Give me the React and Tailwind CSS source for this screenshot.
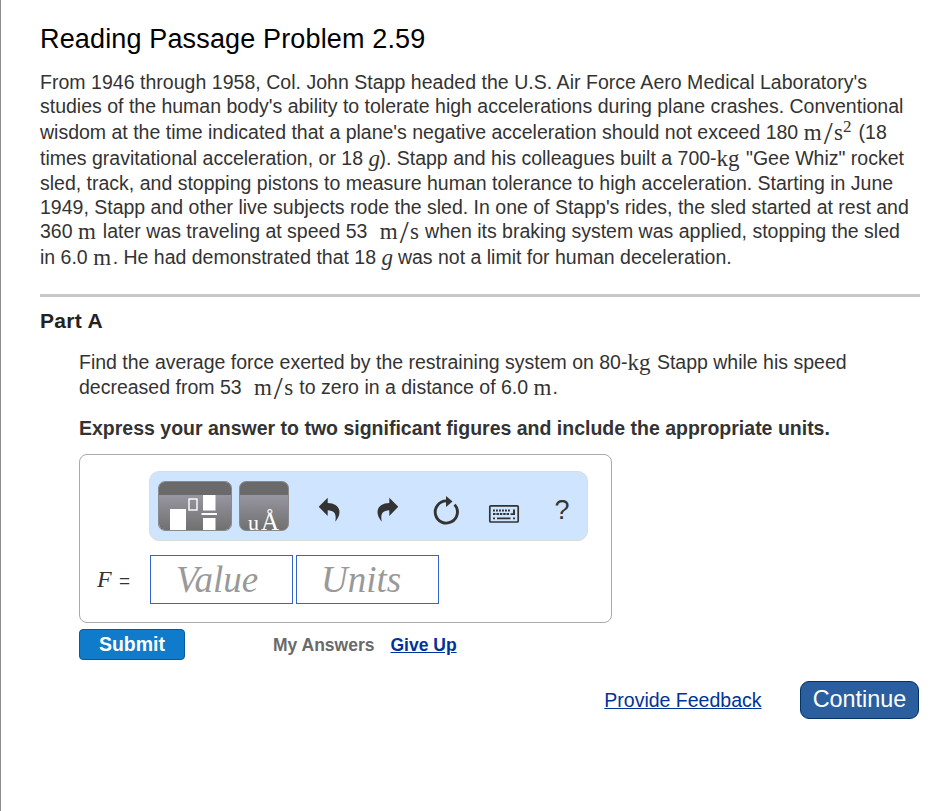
import { useState } from 'react'

function Unit({ children, className = '' }) {
  return (
    <span className={`inline-block translate-y-px whitespace-nowrap font-['Liberation_Serif',serif] text-[23px] leading-none ${className}`}>
      {children}
    </span>
  )
}

function Slash() {
  return <span className="mx-[3px] inline-block translate-y-px scale-x-[1.4] scale-y-[1.35] leading-none">/</span>
}

function Passage() {
  return (
    <div className="mt-[15px] whitespace-nowrap text-[19.5px] leading-6 text-[#333]">
      <div className="h-6 tracking-[0.03px]">From 1946 through 1958, Col. John Stapp headed the U.S. Air Force Aero Medical Laboratory&apos;s</div>
      <div className="h-6">studies of the human body&apos;s ability to tolerate high accelerations during plane crashes. Conventional</div>
      <div className="mt-[2px] h-6">
        wisdom at the time indicated that a plane&apos;s negative acceleration should not exceed 180{' '}
        <Unit className="w-[49.5px]">m<Slash />s<span className="relative -top-[8px] text-[17px] leading-none">2</span></Unit> (18
      </div>
      <div className="mt-[2px] h-6">
        times gravitational acceleration, or 18 <Unit className="w-[11px] italic">g</Unit>). Stapp and his colleagues built a 700-
        <Unit className="w-[24px]">kg</Unit> &quot;Gee Whiz&quot; rocket
      </div>
      <div className="mt-px h-6">sled, track, and stopping pistons to measure human tolerance to high acceleration. Starting in June</div>
      <div className="h-6">1949, Stapp and other live subjects rode the sled. In one of Stapp&apos;s rides, the sled started at rest and</div>
      <div className="h-6">
        360 <Unit className="w-[19.5px]">m</Unit> later was traveling at speed 53 &nbsp;<Unit className="w-[41.5px] pl-[1.5px]">m<Slash />s</Unit> when its
        braking system was applied, stopping the sled
      </div>
      <div className="mt-[2px] h-6">
        in 6.0 <Unit className="w-[19.5px]">m</Unit>. He had demonstrated that 18 <Unit className="w-[11px] italic">g</Unit> was not a limit for human deceleration.
      </div>
    </div>
  )
}

function TemplateButton() {
  return (
    <button type="button" aria-label="Templates" className="h-[50px] w-[74px] overflow-hidden rounded-[7px] border border-[#8a8a8a]">
      <svg viewBox="0 0 72 48" width="72" height="48">
        <defs>
          <linearGradient id="key" x1="0" y1="0" x2="0" y2="1">
            <stop offset="0.27" stopColor="#9896a1" />
            <stop offset="1" stopColor="#707070" />
          </linearGradient>
        </defs>
        <rect width="72" height="48" fill="url(#key)" />
        <rect width="72" height="13" fill="#6a6a6a" />
        <path d="M11 27h16v21H11zM44 13h12.500v15.500H44zM44 36h12.500v12H44zM42.500 31h15.500v2H42.500z" fill="#fff" />
        <rect x="30" y="17" width="8" height="11" fill="none" stroke="#fff" strokeWidth="1.4" />
      </svg>
    </button>
  )
}

function SymbolButton() {
  return (
    <button
      type="button"
      aria-label="Symbols"
      className="h-[50px] w-[50px] overflow-hidden rounded-[7px] border border-[#8a8a8a] bg-linear-to-b from-[#9896a1] from-27% to-[#707070]"
    >
      <span className="block h-[13px] bg-[#6a6a6a]" />
      <span className="flex h-[35px] items-baseline justify-end gap-[2px] pt-[14px] pr-[9px] font-['Liberation_Serif',serif] text-white">
        <span className="text-[22px] leading-none">u</span>
        <span className="text-[25px] leading-none">Å</span>
      </span>
    </button>
  )
}

function Toolbar() {
  return (
    <div className="flex h-[70px] w-[439px] rounded-[10px] border border-[#dcdcdc] bg-[#cfe5ff] pt-[9px] pl-[8px] text-[#333]">
      <TemplateButton />
      <div className="ml-[7px]"><SymbolButton /></div>
      <svg className="ml-[29px] shrink-0" width="250" height="51" viewBox="0 0 250 51" fill="currentColor">
        <path d="M.7 25.700 9.700 16.700V22C17 22 21.500 26 21.500 31C21.500 35 19.500 38 17.300 40.700C18.500 33 17 29.700 9.700 29.200V35z" />
        <path d="M80.300 25.700 71.300 16.700V22C64 22 59.500 26 59.500 31C59.500 35 61.500 38 63.700 40.700C62.500 33 64 29.700 71.300 29.200V35z" />
        <path d="M136.600 23.600A11.100 11.100 0 1 1 128.500 19.900" fill="none" stroke="currentColor" strokeWidth="2.900" />
        <path d="M128 15 134.500 20.500 128 26z" />
        <rect x="171.800" y="24.800" width="28.400" height="16.200" rx="1" fill="none" stroke="currentColor" strokeWidth="1.700" />
        <path d="M175 29.500h17" fill="none" stroke="currentColor" strokeWidth="1.900" strokeDasharray="1.900 1.100" />
        <path d="M175 33h16" fill="none" stroke="currentColor" strokeWidth="1.900" strokeDasharray="2.500 .9" />
        <path d="M175 36.500h2v1.800h-2zM179 36.500h13.500v1.800H179zM195 36.500h2v1.800h-2zM195 28.500h2v5.500h-4.500v-1.800H195z" />
      </svg>
      <button type="button" aria-label="Help" className="-ml-[14px] mt-[13px] h-8 w-4 shrink-0 text-[27px] leading-8">?</button>
    </div>
  )
}

export default function App() {
  const [value, setValue] = useState('')
  const [units, setUnits] = useState('')

  return (
    <main className="h-[811px] w-[952px] overflow-hidden border-l border-[#8c8c8c] bg-white pl-[39px] font-['Liberation_Sans',Arial,sans-serif]">
      <h1 className="pt-[23px] text-[27px] leading-8 tracking-[0.15px] text-black">Reading Passage Problem 2.59</h1>
      <Passage />

      <div className="mt-[25px] h-[3px] w-[880px] bg-[#c8c8c8]" />
      <h2 className="mt-[12px] text-[21px] leading-6 font-bold tracking-[0.3px] text-[#222]">Part A</h2>

      <section className="pl-[39px] text-[19.5px] leading-6 text-[#333]">
        <div className="mt-[17px] whitespace-nowrap">
          <div className="h-6">
            Find the average force exerted by the restraining system on 80-<Unit className="w-[24px]">kg</Unit> Stapp while his speed
          </div>
          <div className="mt-px h-6">
            decreased from 53 &nbsp;<Unit className="w-[41.5px] pl-[1.5px]">m<Slash />s</Unit> to zero in a distance of 6.0 <Unit className="w-[19px]">m</Unit>.
          </div>
        </div>
        <p className="mt-[17px] font-bold whitespace-nowrap">Express your answer to two significant figures and include the appropriate units.</p>

        <div className="mt-[14px] h-[169px] w-[533px] rounded-[8px] border border-[#aaa] pt-[16px]">
          <div className="ml-[69px]"><Toolbar /></div>
          <div className="mt-[14px] flex h-[49px] items-center gap-[3px]">
            <label className="w-[67px] pl-[17px] text-[19px] whitespace-nowrap">
              <span className="mr-[2px] font-['Liberation_Serif',serif] text-[24px] italic">F</span> =
            </label>
            <input
              value={value}
              onChange={(event) => setValue(event.target.value)}
              placeholder="Value"
              className="h-[49px] w-[143px] border border-[#3366cc] pb-px pl-[25px] font-['Liberation_Serif',serif] text-[37px] italic placeholder:text-[#999]"
            />
            <input
              value={units}
              onChange={(event) => setUnits(event.target.value)}
              placeholder="Units"
              className="h-[49px] w-[143px] border border-[#3366cc] pb-px pl-[24px] font-['Liberation_Serif',serif] text-[37px] italic placeholder:text-[#999]"
            />
          </div>
        </div>

        <div className="mt-[6px] flex items-center text-[17.5px] font-bold">
          <button type="button" className="h-[31px] w-[106px] rounded-[4px] border border-[#0b5a96] bg-[#107acb] pb-[2px] text-[19.5px] text-white">Submit</button>
          <span className="ml-[88px] text-[#6a6a6a]">My Answers</span>
          <a href="#give-up" className="ml-[16px] text-[#003399] underline">Give Up</a>
        </div>
      </section>

      <footer className="mt-[21px] flex w-[879px] items-center justify-end">
        <a href="#feedback" className="pt-[2px] text-[19.5px] text-[#003399] underline">Provide Feedback</a>
        <button type="button" className="ml-[38.5px] h-[38px] w-[119px] rounded-[9px] border border-[#003366] bg-[#2b5e9e] text-[23.4px] text-white">
          Continue
        </button>
      </footer>
    </main>
  )
}
